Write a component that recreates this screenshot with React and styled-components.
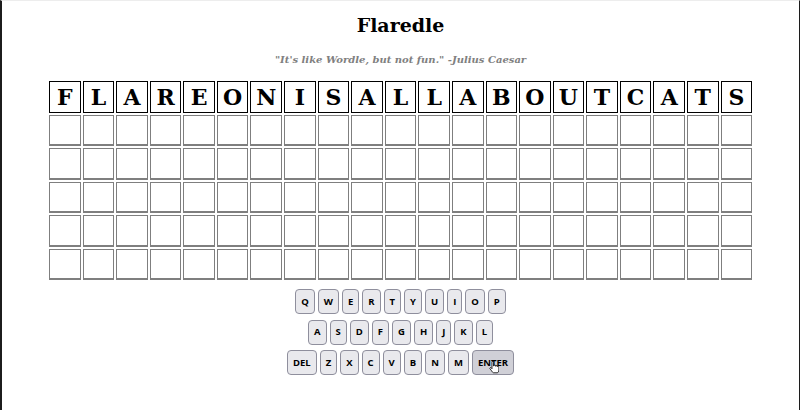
import React from 'react';
import styled, { createGlobalStyle } from 'styled-components';

const ANSWER = 'FLAREONISALLABOUTCATS';
const EMPTY_ROWS = 5;
const KEY_ROWS = [
  ['Q', 'W', 'E', 'R', 'T', 'Y', 'U', 'I', 'O', 'P'],
  ['A', 'S', 'D', 'F', 'G', 'H', 'J', 'K', 'L'],
  ['DEL', 'Z', 'X', 'C', 'V', 'B', 'N', 'M', 'ENTER'],
];

const GlobalStyle = createGlobalStyle`
  html, body {
    margin: 0;
    padding: 0;
    background: #fff;
  }
  * {
    box-sizing: border-box;
  }
`;

const Page = styled.div`
  width: 800px;
  height: 410px;
  border-top: 1px solid #ededed;
  border-left: 2px solid #1c1c1c;
  border-right: 1px solid #1c1c1c;
  display: flex;
  flex-direction: column;
  align-items: center;
  font-family: "DejaVu Serif", serif;
`;

const Title = styled.h1`
  margin: 12px 0 0;
  font-size: 19px;
  line-height: 24px;
  font-weight: bold;
  color: #000;
`;

const Quote = styled.p`
  margin: 16px 0 0;
  font-size: 10px;
  line-height: 14px;
  font-style: italic;
  font-weight: bold;
  color: #808080;
`;

const Board = styled.div`
  margin-top: 14px;
  width: 703px;
  display: flex;
  flex-direction: column;
  gap: 2px;
`;

const Row = styled.div`
  display: flex;
  gap: 2px;
`;

const Cell = styled.div`
  flex: 1 1 0;
  height: 31.5px;
  display: flex;
  align-items: center;
  justify-content: center;
  background: #fff;
  font-size: 22px;
  font-weight: bold;
  color: #000;
  border: ${(p) => (p.$filled ? '1px solid #000' : '1px solid #7f7f7f')};
  border-bottom-width: ${(p) => (p.$filled ? '1px' : '2px')};
`;

const Keyboard = styled.div`
  margin-top: 9px;
  display: flex;
  flex-direction: column;
  align-items: center;
  gap: 5.5px;
`;

const KeyRow = styled.div`
  display: flex;
  gap: 3px;
`;

const Key = styled.button`
  position: relative;
  height: 25px;
  padding: 0 5px;
  border: 1px solid #8f8f9d;
  border-radius: 4px;
  background: ${(p) => (p.$hover ? '#d0d0d7' : '#e9e9ed')};
  color: #000;
  font-family: "Open Sans", "DejaVu Sans", sans-serif;
  font-size: 9.5px;
  font-weight: bold;
  line-height: 1;
  cursor: pointer;
`;

const Pointer = styled.svg`
  position: absolute;
  left: 16px;
  top: 10px;
  width: 10px;
  height: 13px;
  pointer-events: none;
`;

const HandCursor = () => (
  <Pointer viewBox="0 0 12 16">
    <path
      d="M3.5 1.5a1 1 0 0 1 2 0V6h.5a1 1 0 0 1 2 0v.5a1 1 0 0 1 2 0v.5a1 1 0 0 1 2 0V11c0 2-1 3.5-2 3.5H5.5c-1 0-1.5-1-2.5-2.5L1 9.5a1 1 0 0 1 1.5-1.2L3.5 9.5Z"
      fill="#fff"
      stroke="#000"
      strokeWidth="1"
      strokeLinejoin="round"
    />
  </Pointer>
);

const App = () => {
  return (
    <Page>
      <GlobalStyle />
      <Title>Flaredle</Title>
      <Quote>"It's like Wordle, but not fun." -Julius Caesar</Quote>

      <Board>
        <Row>
          {ANSWER.split('').map((ch, i) => (
            <Cell key={i} $filled>
              {ch}
            </Cell>
          ))}
        </Row>
        {Array.from({ length: EMPTY_ROWS }).map((_, r) => (
          <Row key={r}>
            {ANSWER.split('').map((_, i) => (
              <Cell key={i} />
            ))}
          </Row>
        ))}
      </Board>

      <Keyboard>
        {KEY_ROWS.map((row, r) => (
          <KeyRow key={r}>
            {row.map((k) => (
              <Key key={k} $hover={k === 'ENTER'}>
                {k}
                {k === 'ENTER' && <HandCursor />}
              </Key>
            ))}
          </KeyRow>
        ))}
      </Keyboard>
    </Page>
  );
};

export default App;
